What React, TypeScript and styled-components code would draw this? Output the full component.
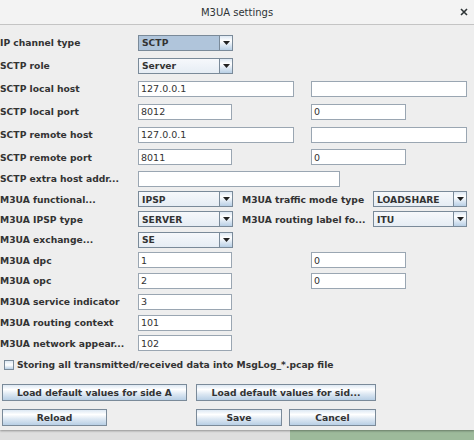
import React from 'react';
import styled, {createGlobalStyle} from 'styled-components';

const GlobalStyle = createGlobalStyle`
  html, body {
    margin: 0;
    padding: 0;
  }
  body {
    width: 474px;
    height: 440px;
    overflow: hidden;
    background: #dcdcdc;
    font-family: "DejaVu Sans", "Liberation Sans", sans-serif;
  }
`;

const Screen = styled.div`
  width: 474px;
  height: 440px;
  display: flex;
  flex-direction: column;
`;

const Dialog = styled.div`
  height: 430px;
  flex: none;
  background: #eeeeee;
  display: flex;
  flex-direction: column;
  box-shadow: 0 1px 2px rgba(0, 0, 0, 0.35);
  position: relative;
  z-index: 1;
`;

const TitleBar = styled.div`
  height: 25px;
  flex: none;
  box-sizing: border-box;
  display: grid;
  grid-template-columns: 1fr auto 1fr;
  align-items: center;
  background: #f3f3f3;
  border-bottom: 1px solid #c4c4c4;
  font-size: 10px;
  color: #2e3436;
`;

const Title = styled.span`
  grid-column: 2;
`;

const CloseBox = styled.span`
  justify-self: end;
  display: flex;
  padding-right: 6px;
`;

const Form = styled.div`
  padding-top: 6px;
  display: flex;
  flex-direction: column;
`;

const Row = styled.div<{$h: number}>`
  height: ${p => p.$h}px;
  display: grid;
  grid-template-columns: 138px 173px 1fr;
  align-items: center;
`;

const Label = styled.span`
  font-size: 9.2px;
  font-weight: bold;
  color: #333;
  white-space: nowrap;
`;

const Field = styled.input<{$w: number}>`
  width: ${p => p.$w}px;
  height: 16px;
  box-sizing: border-box;
  margin: 0;
  border: 1px solid #9aa6b2;
  background: #fff;
  padding: 0 2px;
  font-family: "DejaVu Sans", sans-serif;
  font-size: 9.5px;
  color: #333;
  outline: none;
`;

const WideField = styled(Field)`
  grid-column: 2 / 4;
`;

const Pair = styled.div`
  grid-column: 2 / 4;
  display: flex;
  align-items: center;
`;

const SideLabel = styled(Label)`
  width: 131px;
  margin-left: 9px;
`;

const ComboBox = styled.div<{$w: number}>`
  width: ${p => p.$w}px;
  height: 16px;
  box-sizing: border-box;
  border: 1px solid #7a8a99;
  display: flex;
`;

const ComboValue = styled.div<{$focused?: boolean}>`
  flex: 1;
  display: flex;
  align-items: center;
  padding-left: 3px;
  font-size: 9.2px;
  font-weight: bold;
  color: #333;
  background: ${p => (p.$focused ? '#b0c5db' : 'linear-gradient(#f6f8fb, #e6edf4)')};
`;

const ArrowBox = styled.div`
  width: 12px;
  border-left: 1px solid #7a8a99;
  display: flex;
  align-items: center;
  justify-content: center;
  background: linear-gradient(#dde8f3 0%, #ffffff 35%, #dde8f3 65%, #b8cfe5 100%);
`;

const CheckRow = styled.label`
  height: 23px;
  display: flex;
  align-items: center;
  gap: 3px;
  padding-left: 4px;
`;

const CheckBox = styled.span`
  width: 10px;
  height: 10px;
  box-sizing: border-box;
  border: 1px solid #7a8a99;
  background: linear-gradient(#dde8f3, #ffffff 50%, #b8cfe5);
`;

const Buttons = styled.div`
  padding: 8px 0 0 2px;
  display: grid;
  grid-template-columns: 194px 180px;
  row-gap: 8px;
`;

const Group = styled.div`
  display: flex;
  gap: 7px;
`;

const Button = styled.button<{$w?: number}>`
  width: ${p => (p.$w ? `${p.$w}px` : '100%')};
  height: 17px;
  margin: 0;
  padding: 0;
  box-sizing: border-box;
  border: 1px solid #7a8a99;
  background: linear-gradient(#dde8f3 0%, #ffffff 30%, #dde8f3 60%, #b8cfe5 100%);
  font-family: "DejaVu Sans", sans-serif;
  font-size: 9.2px;
  font-weight: bold;
  color: #333;
`;

const Backdrop = styled.div`
  flex: 1;
  display: flex;
`;

const Desk = styled.div`
  width: 290px;
  background: #dedede;
`;

const Green = styled.div`
  flex: 1;
  background: #9dba9b;
`;

function Arrow() {
  return (
    <svg width="7" height="4" viewBox="0 0 7 4">
      <path d="M0 0h7L3.5 4z" fill="#222"/>
    </svg>
  );
}

function Close() {
  return (
    <svg width="8" height="8" viewBox="0 0 8 8">
      <path d="M1 1l6 6M7 1l-6 6" stroke="#2e3436" strokeWidth="1.6"/>
    </svg>
  );
}

function Combo({value, w = 95, focused}: {value: string; w?: number; focused?: boolean}) {
  return (
    <ComboBox $w={w}>
      <ComboValue $focused={focused}>{value}</ComboValue>
      <ArrowBox><Arrow/></ArrowBox>
    </ComboBox>
  );
}

export default function App() {
  return (
    <Screen>
      <GlobalStyle/>
      <Dialog>
        <TitleBar>
          <Title>M3UA settings</Title>
          <CloseBox><Close/></CloseBox>
        </TitleBar>
        <Form>
          <Row $h={23}>
            <Label>IP channel type</Label>
            <Combo value="SCTP" focused/>
          </Row>
          <Row $h={23}>
            <Label>SCTP role</Label>
            <Combo value="Server"/>
          </Row>
          <Row $h={23}>
            <Label>SCTP local host</Label>
            <Field $w={156} readOnly defaultValue="127.0.0.1"/>
            <Field $w={156} readOnly defaultValue=""/>
          </Row>
          <Row $h={23}>
            <Label>SCTP local port</Label>
            <Field $w={94} readOnly defaultValue="8012"/>
            <Field $w={95} readOnly defaultValue="0"/>
          </Row>
          <Row $h={23}>
            <Label>SCTP remote host</Label>
            <Field $w={156} readOnly defaultValue="127.0.0.1"/>
            <Field $w={156} readOnly defaultValue=""/>
          </Row>
          <Row $h={22}>
            <Label>SCTP remote port</Label>
            <Field $w={94} readOnly defaultValue="8011"/>
            <Field $w={95} readOnly defaultValue="0"/>
          </Row>
          <Row $h={21}>
            <Label>SCTP extra host addr...</Label>
            <WideField $w={202} readOnly defaultValue=""/>
          </Row>
          <Row $h={20}>
            <Label>M3UA functional...</Label>
            <Pair>
              <Combo value="IPSP"/>
              <SideLabel>M3UA traffic mode type</SideLabel>
              <Combo value="LOADSHARE" w={94}/>
            </Pair>
          </Row>
          <Row $h={20}>
            <Label>M3UA IPSP type</Label>
            <Pair>
              <Combo value="SERVER"/>
              <SideLabel>M3UA routing label fo...</SideLabel>
              <Combo value="ITU" w={94}/>
            </Pair>
          </Row>
          <Row $h={21}>
            <Label>M3UA exchange...</Label>
            <Combo value="SE"/>
          </Row>
          <Row $h={20}>
            <Label>M3UA dpc</Label>
            <Field $w={94} readOnly defaultValue="1"/>
            <Field $w={95} readOnly defaultValue="0"/>
          </Row>
          <Row $h={21}>
            <Label>M3UA opc</Label>
            <Field $w={94} readOnly defaultValue="2"/>
            <Field $w={95} readOnly defaultValue="0"/>
          </Row>
          <Row $h={21}>
            <Label>M3UA service indicator</Label>
            <Field $w={94} readOnly defaultValue="3"/>
          </Row>
          <Row $h={21}>
            <Label>M3UA routing context</Label>
            <Field $w={94} readOnly defaultValue="101"/>
          </Row>
          <Row $h={20}>
            <Label>M3UA network appear...</Label>
            <Field $w={94} readOnly defaultValue="102"/>
          </Row>
          <CheckRow>
            <CheckBox/>
            <Label>Storing all transmitted/received data into MsgLog_*.pcap file</Label>
          </CheckRow>
        </Form>
        <Buttons>
          <Button $w={185}>Load default values for side A</Button>
          <Button>Load default values for sid...</Button>
          <Button $w={105}>Reload</Button>
          <Group>
            <Button $w={86}>Save</Button>
            <Button $w={87}>Cancel</Button>
          </Group>
        </Buttons>
      </Dialog>
      <Backdrop>
        <Desk/>
        <Green/>
      </Backdrop>
    </Screen>
  );
}
